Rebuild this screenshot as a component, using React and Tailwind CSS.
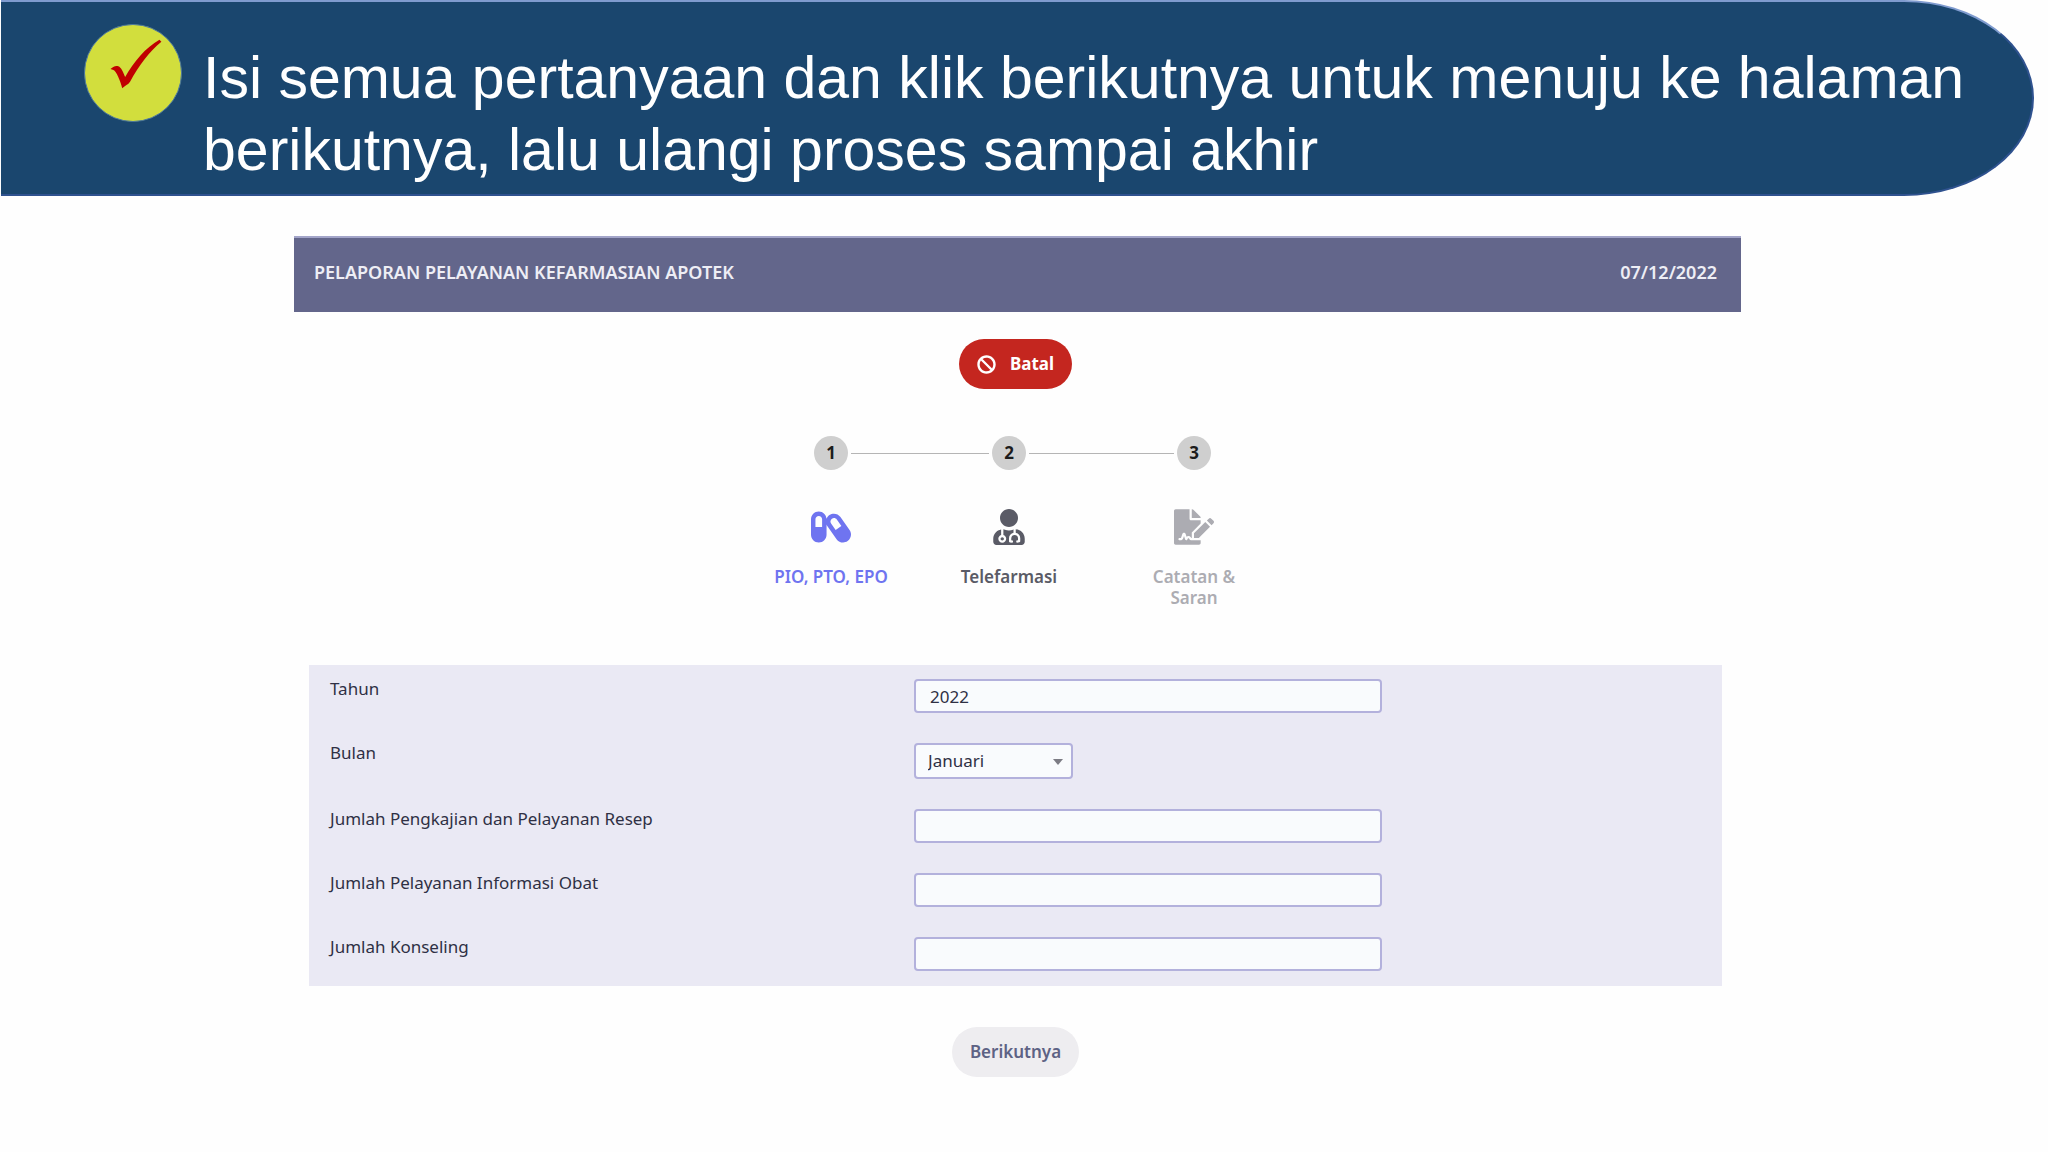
import { FaBan, FaCapsules, FaFileSignature, FaUserMd } from "react-icons/fa";

const MONTHS = [
  "Januari", "Februari", "Maret", "April", "Mei", "Juni",
  "Juli", "Agustus", "September", "Oktober", "November", "Desember",
];

const COUNTS = [
  { id: "resep", label: "Jumlah Pengkajian dan Pelayanan Resep" },
  { id: "informasi", label: "Jumlah Pelayanan Informasi Obat" },
  { id: "konseling", label: "Jumlah Konseling" },
];

const INPUT =
  "h-[34px] w-full max-w-[468px] rounded-[4px] border-2 border-[#b3b1dc] bg-[#f9fbfd] px-3.5 text-[17px] text-[#2f3044]";

function Banner() {
  return (
    <header className="ml-px mr-3.5 flex min-h-[196px] items-start gap-[21px] rounded-[0_130px_130px_0/0_98px_98px_0] border-y-2 border-r-2 border-t-[#7f9bcf] border-r-[#2f528f] border-b-[#2f528f] bg-[#1a466e] pt-[22px] pl-[83px]">
      <span className="h-[98px] w-[98px] shrink-0 rounded-full border border-[#4a76a0] bg-[#d2de3d]">
        <svg viewBox="0 0 98 98" className="h-full w-full" aria-hidden="true">
          <path
            d="M26 45 C28 43 31 41 34 42 C37 43 39 48 41 53 C50 37 62 23 76 15 L78 17 C66 27 55 41 46 58 C44 61 41 62 38 64.500 C36 57 32 47 29 46 Z"
            fill="#c00000"
          />
        </svg>
      </span>
      <h1 className="pt-[18px] font-['Liberation_Sans',sans-serif] text-[59px] leading-[72px] text-white">
        Isi semua pertanyaan dan klik berikutnya untuk menuju ke halaman
        <br />
        berikutnya, lalu ulangi proses sampai akhir
      </h1>
    </header>
  );
}

function Step({ number, icon, label, tone }) {
  return (
    <li className="flex w-[34px] flex-col items-center">
      <span className="flex h-[34px] w-[34px] items-center justify-center rounded-full bg-[#cfcfcf] text-[17px] font-bold text-[#1c1c1c]">
        {number}
      </span>
      <div className={"mt-[39px] flex flex-col items-center " + tone}>
        {icon}
        <span className="mt-[21px] text-center text-[17px] leading-[21px] font-semibold whitespace-pre">
          {label}
        </span>
      </div>
    </li>
  );
}

function Row({ id, label, children }) {
  return (
    <div className="grid grid-cols-[584px_1fr] items-start">
      <label htmlFor={id} className="text-[17px] leading-5 text-[#2f3044]">
        {label}
      </label>
      {children}
    </div>
  );
}

export default function App() {
  return (
    <div className="min-h-screen bg-[#fefefe] font-['Noto_Sans',sans-serif]">
      <Banner />
      <main className="mt-10 pr-[307px] pl-[294px]">
        <div className="flex h-[76px] items-start justify-between border-t-2 border-[#a3a5c9] bg-[#63668b] pt-[22px] pr-6 pl-5 text-[18px] leading-6 font-semibold text-[#eeeef5]">
          <h2>PELAPORAN PELAYANAN KEFARMASIAN APOTEK</h2>
          <time dateTime="2022-12-07">07/12/2022</time>
        </div>

        <form className="flex flex-col items-center pr-[19px] pl-[15px]" onSubmit={(e) => e.preventDefault()}>
          <button
            type="button"
            className="mt-[27px] flex h-[50px] items-center gap-3.5 rounded-full bg-[#c4261f] px-[18px] text-[17px] font-bold text-white"
          >
            <FaBan size={19} />
            Batal
          </button>

          <ol className="mt-[47px] flex items-start gap-[3px] pr-1.5">
            <Step
              number="1"
              icon={<FaCapsules className="h-9 w-10" />}
              label="PIO, PTO, EPO"
              tone="text-[#6f74f0]"
            />
            <li aria-hidden="true" className="mt-[17px] h-px w-[138px] bg-[#b5b5b5]" />
            <Step
              number="2"
              icon={<FaUserMd className="h-9 w-10" />}
              label="Telefarmasi"
              tone="text-[#5a5b66]"
            />
            <li aria-hidden="true" className="mt-[17px] h-px w-[145px] bg-[#b5b5b5]" />
            <Step
              number="3"
              icon={<FaFileSignature className="h-9 w-10" />}
              label={"Catatan &\nSaran"}
              tone="text-[#acacb2]"
            />
          </ol>

          <div className="mt-[57px] flex w-full flex-col gap-[30px] bg-[#eae9f4] px-[21px] pt-3.5 pb-[15px]">
            <Row id="tahun" label="Tahun">
              <input id="tahun" type="text" defaultValue="2022" className={INPUT} />
            </Row>
            <Row id="bulan" label="Bulan">
              <div className="relative w-[159px]">
                <select
                  id="bulan"
                  defaultValue="Januari"
                  className="block h-9 w-full appearance-none rounded-[4px] border-2 border-[#b3b1dc] bg-[#f9fbfd] pl-3 text-[17px] text-[#2f3044]"
                >
                  {MONTHS.map((m) => (
                    <option key={m}>{m}</option>
                  ))}
                </select>
                <svg
                  viewBox="0 0 10 6"
                  className="pointer-events-none absolute top-4 right-2.5 h-1.5 w-2.5"
                  aria-hidden="true"
                >
                  <path d="M0 0H10L5 6Z" fill="#7c7c84" />
                </svg>
              </div>
            </Row>
            {COUNTS.map((c) => (
              <Row key={c.id} id={c.id} label={c.label}>
                <input id={c.id} type="text" className={INPUT} />
              </Row>
            ))}
          </div>

          <button
            type="submit"
            className="mt-[41px] h-[50px] rounded-full bg-[#eeedf0] px-[18px] text-[17px] font-semibold text-[#5d6284]"
          >
            Berikutnya
          </button>
        </form>
      </main>
    </div>
  );
}
